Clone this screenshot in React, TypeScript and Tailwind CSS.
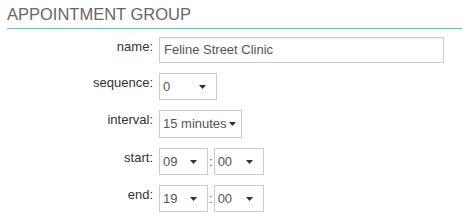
import React from "react";

function Caret() {
  return (
    <svg width="7" height="4" viewBox="0 0 7 4" className="shrink-0">
      <path d="M0 0H7L3.5 4Z" fill="#333" />
    </svg>
  );
}

function Select({ value, w }: { value: string; w: string }) {
  return (
    <div
      className={`${w} h-[27px] border border-[#ccc] bg-white flex items-center justify-between pl-[3px] pr-[10px] text-[13px] text-[#555]`}
    >
      <span>{value}</span>
      <Caret />
    </div>
  );
}

function Row({ label, children }: { label: string; children: React.ReactNode }) {
  return (
    <div className="flex items-start">
      <div className="w-[152px] shrink-0 text-right pr-[6px] text-[13px] text-[#333] leading-[18px] pt-[1px]">{label}</div>
      {children}
    </div>
  );
}

export default function App() {
  return (
    <div className="w-[462px] h-[217px] bg-white pl-[7px] pt-[4px] overflow-hidden" style={{ fontFamily: '"Liberation Sans", Arial, sans-serif' }}>
      <div className="text-[16.5px] leading-[20px] text-[#666] uppercase">Appointment Group</div>
      <div className="h-[1px] bg-[#5bc0de] mt-[4px]" />
      <div className="flex flex-col gap-[10px] mt-[8px]">
        <Row label="name:">
          <div className="w-[285px] h-[26px] border border-[#ccc] bg-white shadow-[inset_0_1px_1px_rgba(0,0,0,0.075)] flex items-center pl-[4px] text-[13px] text-[#555]">
            Feline Street Clinic
          </div>
        </Row>
        <Row label="sequence:">
          <Select value="0" w="w-[58px]" />
        </Row>
        <Row label="interval:">
          <div className="w-[83px] h-[28px] border border-[#ccc] bg-white flex items-center pl-[3px] gap-[2px] text-[13px] text-[#555]">
            <span>15 minutes</span>
            <Caret />
          </div>
        </Row>
        <Row label="start:">
          <div className="flex items-center">
            <Select value="09" w="w-[49px]" />
            <span className="text-[13px] text-[#555] px-[1px]">:</span>
            <Select value="00" w="w-[50px]" />
          </div>
        </Row>
        <Row label="end:">
          <div className="flex items-center">
            <Select value="19" w="w-[49px]" />
            <span className="text-[13px] text-[#555] px-[1px]">:</span>
            <Select value="00" w="w-[50px]" />
          </div>
        </Row>
      </div>
    </div>
  );
}
